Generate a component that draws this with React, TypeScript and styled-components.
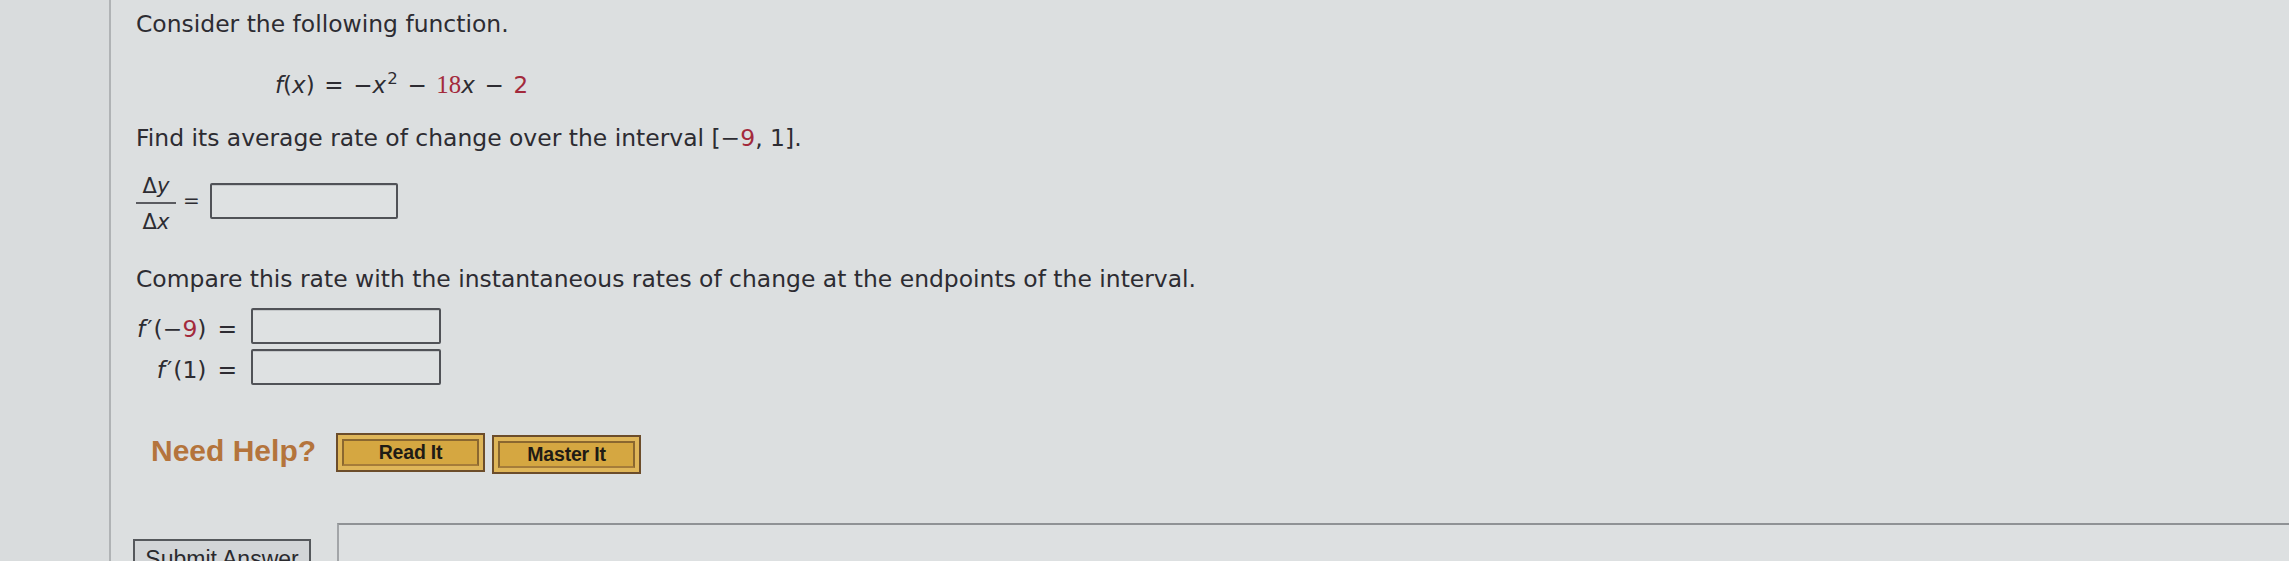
import React from "react";
import styled, { createGlobalStyle } from "styled-components";

const Global = createGlobalStyle`
  html, body { margin: 0; padding: 0; }
  body {
    background: #dcdfe0;
    font-family: "DejaVu Sans", Verdana, sans-serif;
    color: #2d2c32;
    overflow: hidden;
  }
`;

const Page = styled.div`
  display: flex;
  width: 2289px;
  height: 561px;
  overflow: hidden;
`;

const SideStrip = styled.div`
  width: 109px;
  flex: none;
  background: #d9dcdd;
  border-right: 2px solid #b0b3b5;
`;

const Content = styled.div`
  flex: 1;
  padding: 9px 0 0 25px;
  display: flex;
  flex-direction: column;
  align-items: flex-start;
  background: #dcdfe0;
`;

const TextLine = styled.div<{ $mt?: number }>`
  font-size: 23.45px;
  line-height: 30px;
  height: 30px;
  margin-top: ${(p) => p.$mt ?? 0}px;
  white-space: nowrap;
`;

const MathLine = styled(TextLine)`
  font-size: 23px;
  padding-left: 139px;
`;

const V = styled.span`
  font-style: italic;
`;

const Op = styled.span`
  margin: 0 0.42em;
`;

const Sup = styled.sup`
  font-size: 0.72em;
  vertical-align: 0;
  position: relative;
  top: -0.55em;
  margin-left: 1px;
`;

const Red = styled.span<{ $serif?: boolean }>`
  color: #a32a3c;
  font-family: ${(p) =>
    p.$serif ? '"Liberation Serif", "Times New Roman", serif' : "inherit"};
  font-size: ${(p) => (p.$serif ? "1.08em" : "1em")};
`;

const FracRow = styled.div`
  display: flex;
  align-items: flex-start;
  margin-top: 22px;
`;

const Fraction = styled.div`
  display: flex;
  flex-direction: column;
  align-items: center;
  font-size: 21px;
  width: 40px;
`;

const FracPart = styled.div`
  line-height: 22px;
  height: 22px;
`;

const FracBar = styled.div`
  width: 40px;
  height: 0;
  border-top: 2px solid #5a5b60;
  margin: 5px 0 7px;
`;

const SmallEq = styled.div`
  font-size: 20px;
  line-height: 22px;
  margin: 14px 10px 0 7px;
`;

const AnswerBox = styled.div<{ $w: number; $mt?: number }>`
  width: ${(p) => p.$w}px;
  height: 36px;
  box-sizing: border-box;
  margin-top: ${(p) => p.$mt ?? 0}px;
  border: 2px solid #505257;
  border-radius: 2px;
  background: #dee1e2;
  box-shadow: inset 0 1px 0 #c4c7c9;
`;

const DerivGrid = styled.div`
  display: grid;
  grid-template-columns: auto auto auto;
  row-gap: 5px;
  margin-top: 14px;
  margin-left: 1px;
`;

const DerivLabel = styled.div`
  justify-self: end;
  font-size: 23.45px;
  line-height: 30px;
  padding-top: 6px;
  height: 36px;
  box-sizing: border-box;
  white-space: nowrap;
`;

const Prime = styled.span`
  margin: 0 1px 0 2px;
`;

const DerivEq = styled.div`
  font-size: 23.45px;
  line-height: 30px;
  padding-top: 6px;
  margin: 0 14px 0 11px;
`;

const HelpRow = styled.div`
  display: flex;
  align-items: flex-start;
  margin-top: 48px;
  padding-left: 15px;
`;

const HelpTitle = styled.div`
  font-family: "Liberation Sans", Arial, sans-serif;
  font-weight: bold;
  font-size: 30px;
  line-height: 35px;
  color: #b4743c;
  margin-right: 20px;
  white-space: nowrap;
`;

const GoldButton = styled.button<{ $mt?: number }>`
  width: 149px;
  height: 39px;
  box-sizing: border-box;
  margin: ${(p) => p.$mt ?? 0}px 7px 0 0;
  padding: 4px;
  border: 2px solid #6c4d2b;
  background: #dfb659;
  cursor: pointer;
  display: flex;
`;

const GoldInner = styled.span`
  flex: 1;
  display: flex;
  align-items: center;
  justify-content: center;
  border: 2px solid #8a672f;
  border-bottom-color: #a57c39;
  background: #d5a741;
  font-family: "Liberation Sans", Arial, sans-serif;
  font-weight: bold;
  font-size: 19.5px;
  color: #1f1b15;
  letter-spacing: -0.2px;
`;

const BottomRow = styled.div`
  display: flex;
  align-items: flex-start;
  margin-top: 49px;
  align-self: stretch;
`;

const SubmitButton = styled.button`
  margin: 16px 0 0 -3px;
  width: 178px;
  height: 40px;
  box-sizing: border-box;
  border: 2px solid #55585c;
  background: #d2d5d7;
  padding: 0;
  font-family: "Liberation Sans", Arial, sans-serif;
  font-size: 23px;
  line-height: 28px;
  color: #2a2a2e;
  text-align: center;
`;

const ResponseBox = styled.div`
  flex: 1;
  height: 60px;
  margin-left: 26px;
  border-top: 2px solid #8f9295;
  border-left: 2px solid #a2a5a8;
  background: #dde0e1;
`;

export default function App() {
  return (
    <>
      <Global />
      <Page>
        <SideStrip />
        <Content>
          <TextLine>Consider the following function.</TextLine>
          <MathLine $mt={31}>
            <V>f</V>(<V>x</V>)<Op>=</Op>−<V>x</V>
            <Sup>2</Sup>
            <Op>−</Op>
            <Red $serif>18</Red>
            <V>x</V>
            <Op>−</Op>
            <Red>2</Red>
          </MathLine>
          <TextLine $mt={23}>
            Find its average rate of change over the interval [−<Red>9</Red>, 1].
          </TextLine>
          <FracRow>
            <Fraction>
              <FracPart>
                Δ<V>y</V>
              </FracPart>
              <FracBar />
              <FracPart>
                Δ<V>x</V>
              </FracPart>
            </Fraction>
            <SmallEq>=</SmallEq>
            <AnswerBox $w={188} $mt={8} />
          </FracRow>
          <TextLine $mt={31}>
            Compare this rate with the instantaneous rates of change at the
            endpoints of the interval.
          </TextLine>
          <DerivGrid>
            <DerivLabel>
              <V>f</V>
              <Prime>′</Prime>(−<Red>9</Red>)
            </DerivLabel>
            <DerivEq>=</DerivEq>
            <AnswerBox $w={190} />
            <DerivLabel>
              <V>f</V>
              <Prime>′</Prime>(1)
            </DerivLabel>
            <DerivEq>=</DerivEq>
            <AnswerBox $w={190} />
          </DerivGrid>
          <HelpRow>
            <HelpTitle>Need Help?</HelpTitle>
            <GoldButton>
              <GoldInner>Read It</GoldInner>
            </GoldButton>
            <GoldButton $mt={2}>
              <GoldInner>Master It</GoldInner>
            </GoldButton>
          </HelpRow>
          <BottomRow>
            <SubmitButton>Submit Answer</SubmitButton>
            <ResponseBox />
          </BottomRow>
        </Content>
      </Page>
    </>
  );
}
